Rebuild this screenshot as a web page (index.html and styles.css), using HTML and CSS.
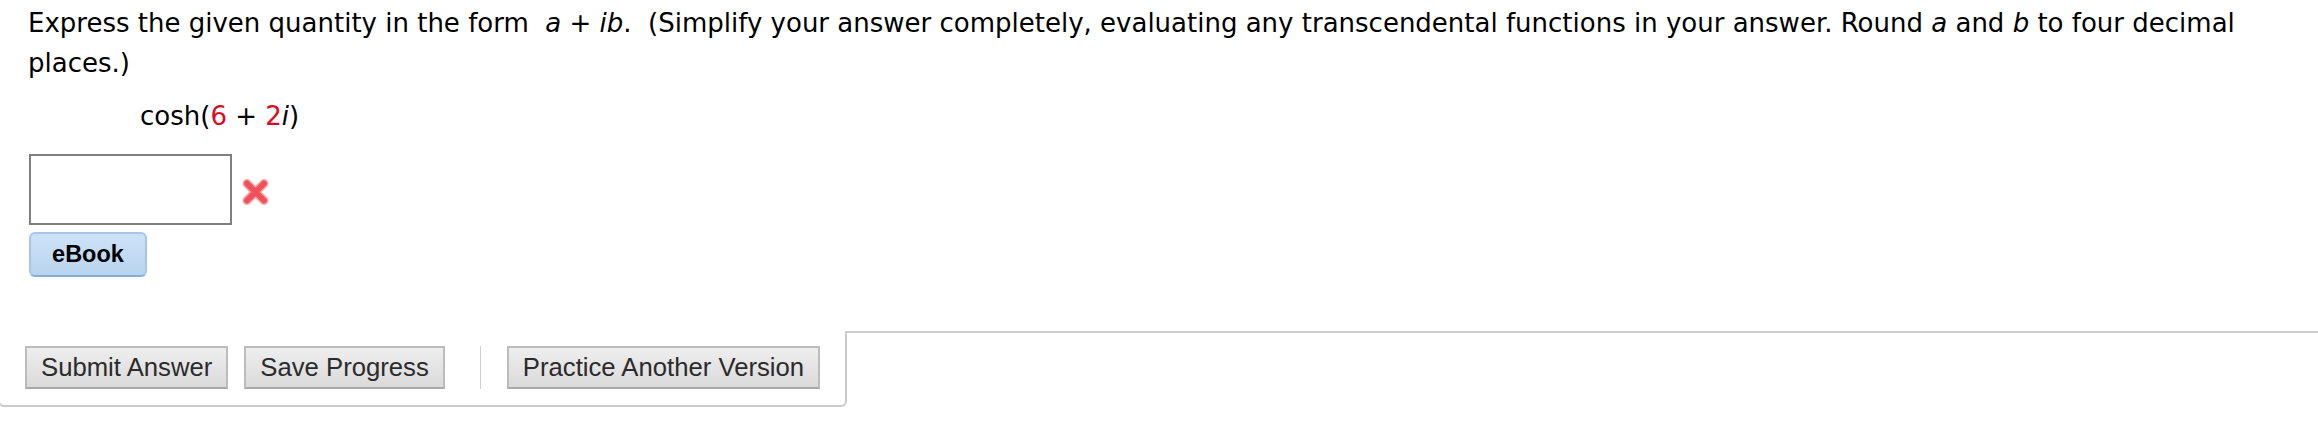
FILE: index.html
```html
<!DOCTYPE html>
<html>
<head>
<meta charset="utf-8">
<link rel="stylesheet" href="styles.css">
</head>
<body>
<div class="question">
  <p class="prompt">Express the given quantity in the form&nbsp; <i>a</i> + <i>ib</i>.&nbsp; (Simplify your answer completely, evaluating any transcendental functions in your answer. Round <i>a</i> and <i>b</i> to four decimal places.)</p>
  <div class="expr">cosh(<span class="red">6</span> + <span class="red">2</span><i>i</i>)</div>
  <div class="answer-row">
    <input class="answer-box" type="text">
    <svg class="wrong" width="27" height="28" viewBox="0 0 27 28">
      <g stroke-linecap="round">
        <path d="M5 5.5 L22 22.5 M22 5.5 L5 22.5" stroke="#f8a9ad" stroke-width="9"/>
        <path d="M5 5.5 L22 22.5 M22 5.5 L5 22.5" stroke="#f0505a" stroke-width="6"/>
      </g>
    </svg>
  </div>
  <button class="ebook">eBook</button>
</div>
<div class="actions">
  <div class="tab">
    <button class="btn">Submit Answer</button>
    <button class="btn">Save Progress</button>
    <span class="sep"></span>
    <button class="btn">Practice Another Version</button>
  </div>
  <div class="rest"></div>
</div>
</body>
</html>
```

FILE: styles.css
```css
html, body {
  margin: 0;
  padding: 0;
  background: #fff;
}

body {
  width: 2318px;
  overflow: hidden;
  font-family: "DejaVu Sans", Verdana, sans-serif;
  color: #000;
}

.question {
  padding-left: 28px;
  display: flex;
  flex-direction: column;
  align-items: flex-start;
}

.prompt {
  margin: 0;
  padding-top: 3px;
  font-size: 26px;
  line-height: 40px;
  padding-right: 20px;
}

.prompt i, .expr i {
  font-style: italic;
}

.expr {
  margin-top: 13px;
  padding-left: 112px;
  font-size: 26px;
  line-height: 40px;
}

.red {
  color: #dc0a1e;
}

.answer-row {
  margin-top: 18px;
  margin-left: 1px;
  display: flex;
  align-items: center;
}

.answer-box {
  box-sizing: border-box;
  width: 203px;
  height: 71px;
  border: 2px solid #7f7f7f;
  margin: 0;
  padding: 0;
  background: #fff;
  outline: none;
}

.wrong {
  display: block;
  margin-left: 10px;
  margin-top: 4px;
}

.ebook {
  margin-top: 7px;
  margin-left: 1px;
  box-sizing: border-box;
  width: 118px;
  height: 45px;
  padding: 0;
  border: 2px solid #a6c6e8;
  border-bottom-color: #87abd6;
  border-radius: 6px;
  background: linear-gradient(#cde2f6, #b9d4f0);
  font-family: "Liberation Sans", Arial, sans-serif;
  font-weight: bold;
  font-size: 23.5px;
  color: #000;
}

.actions {
  margin-top: 54px;
  display: flex;
  align-items: flex-start;
}

.tab {
  margin-left: -2px;
  display: flex;
  align-items: center;
  gap: 16px;
  padding: 15px 25px 16px 25px;
  border: 2px solid #cbcbcb;
  border-top: none;
  border-radius: 0 0 6px 6px;
}

.btn {
  box-sizing: border-box;
  height: 43px;
  padding: 0 14px;
  margin: 0;
  border: 2px solid #bcbcbc;
  border-bottom-color: #a9a9a9;
  border-radius: 0;
  background: linear-gradient(#eeeeee, #dadada);
  font-family: "Liberation Sans", Arial, sans-serif;
  font-size: 25.7px;
  color: #2b2b2b;
  white-space: nowrap;
}

.sep {
  display: block;
  width: 1px;
  height: 43px;
  background: #cfcfcf;
  margin: 0 10px 0 19px;
}

.rest {
  flex: 1;
  border-top: 2px solid #cbcbcb;
}
```
